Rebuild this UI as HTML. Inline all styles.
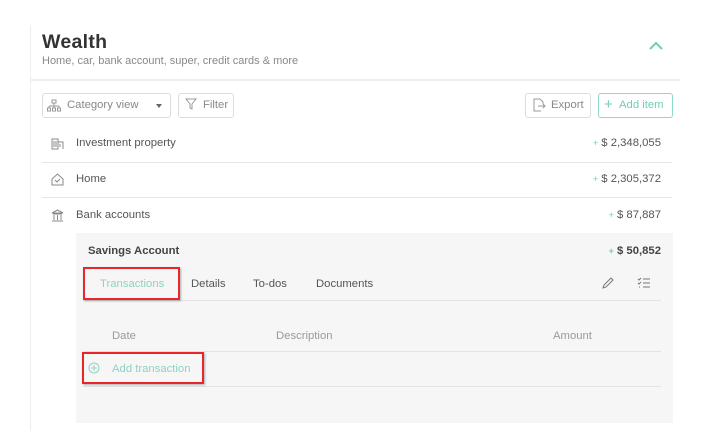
<!DOCTYPE html>
<html><head><style>
*{margin:0;padding:0;box-sizing:border-box}
body{width:706px;height:431px;background:#fff;font-family:"Liberation Sans",sans-serif;position:relative;overflow:hidden;color:#444}
.a{position:absolute}
.t{font-size:11.3px;color:#555}
.r{text-align:right;width:120px}
</style></head><body>
<div class="a" style="left:30px;top:25px;width:1px;height:406px;background:#eee"></div>
<div class="a" style="left:42px;top:31px;font-size:19.5px;font-weight:bold;color:#333;letter-spacing:0.3px">Wealth</div>
<div class="a" style="left:42px;top:55px;font-size:11px;color:#888">Home, car, bank account, super, credit cards &amp; more</div>
<svg class="a" style="left:648px;top:41px" width="16" height="10"><path d="M2 8 L8 2 L14 8" stroke="#6fcfb9" stroke-width="2" fill="none"/></svg>
<div class="a" style="left:30px;top:79px;width:650px;height:2px;background:#eee"></div>

<div class="a" style="left:42px;top:93px;width:129px;height:25px;border:1px solid #ddd;border-radius:3px"></div>
<svg class="a" style="left:47px;top:99px" width="14" height="14"><g stroke="#999" fill="none" stroke-width="1"><rect x="5" y="1" width="4" height="3"/><path d="M7 4v3M2 7h10M2 7v2M7 7v2M12 7v2"/><rect x="0.5" y="9" width="3" height="3"/><rect x="5.5" y="9" width="3" height="3"/><rect x="10.5" y="9" width="3" height="3"/></g></svg>
<div class="a t" style="left:67px;top:99px;color:#888">Category view</div>
<div class="a" style="left:156px;top:104px;border-left:3px solid transparent;border-right:3px solid transparent;border-top:4px solid #666"></div>
<div class="a" style="left:178px;top:93px;width:56px;height:25px;border:1px solid #ddd;border-radius:3px"></div>
<svg class="a" style="left:185px;top:98px" width="12" height="12"><path d="M1 1h10L7 6v5L5 10V6z" stroke="#999" fill="none"/></svg>
<div class="a t" style="left:203px;top:99px;color:#888">Filter</div>

<div class="a" style="left:525px;top:93px;width:66px;height:25px;border:1px solid #ddd;border-radius:3px"></div>
<svg class="a" style="left:532px;top:98px" width="14" height="14"><path d="M8 1H2v12h7M8 1l3 3v2M6 8h7M11 6l2 2-2 2" stroke="#999" fill="none"/></svg>
<div class="a t" style="left:551px;top:99px;color:#888">Export</div>
<div class="a" style="left:598px;top:93px;width:75px;height:25px;border:1px solid #8fd9c8;border-radius:3px"></div>
<div class="a" style="left:604px;top:96px;font-size:15px;color:#6fcfb9">+</div>
<div class="a t" style="left:619px;top:99px;color:#6fcfb9">Add item</div>

<svg class="a" style="left:51px;top:137px" width="13" height="13"><g stroke="#888" fill="none"><rect x="1" y="2" width="6" height="10"/><path d="M7 5h5v7M3 4v6M5 4v6M9 7v3"/></g></svg>
<div class="a t" style="left:76px;top:137px">Investment property</div>
<div class="a t r" style="left:541px;top:137px"><span style="color:#6fcfb9;font-size:9px">+</span> $ 2,348,055</div>
<div class="a" style="left:42px;top:162px;width:630px;height:1px;background:#e5e5e5"></div>

<svg class="a" style="left:51px;top:173px" width="13" height="13"><path d="M1 6L6.5 1 12 6v6H1z M4 7l2 2 3-3" stroke="#888" fill="none"/></svg>
<div class="a t" style="left:76px;top:173px">Home</div>
<div class="a t r" style="left:541px;top:173px"><span style="color:#6fcfb9;font-size:9px">+</span> $ 2,305,372</div>
<div class="a" style="left:42px;top:197px;width:630px;height:1px;background:#e5e5e5"></div>

<svg class="a" style="left:51px;top:209px" width="13" height="13"><path d="M1 4L6.5 1 12 4zM2 5h9M3 6v5M6.5 6v5M10 6v5M1 12h11" stroke="#888" fill="none"/></svg>
<div class="a t" style="left:76px;top:209px">Bank accounts</div>
<div class="a t r" style="left:541px;top:209px"><span style="color:#6fcfb9;font-size:9px">+</span> $ 87,887</div>

<div class="a" style="left:76px;top:233px;width:597px;height:190px;background:#f6f6f6"></div>
<div class="a t" style="left:88px;top:245px;font-weight:bold;color:#444">Savings Account</div>
<div class="a t r" style="left:541px;top:245px;font-weight:bold;color:#444"><span style="color:#6fcfb9;font-size:9px">+</span> $ 50,852</div>

<div class="a" style="left:84px;top:300px;width:577px;height:1px;background:#e3e3e3"></div>
<div class="a" style="left:88px;top:298px;width:88px;height:2px;background:#8fd9c8"></div>
<div class="a" style="left:83px;top:267px;width:97px;height:33px;border:2px solid #e8262a;box-shadow:1px 1px 2px rgba(0,0,0,0.3)"></div>
<div class="a t" style="left:100px;top:278px;color:#8fd2c3">Transactions</div>
<div class="a t" style="left:191px;top:278px">Details</div>
<div class="a t" style="left:253px;top:278px">To-dos</div>
<div class="a t" style="left:316px;top:278px">Documents</div>
<svg class="a" style="left:601px;top:276px" width="14" height="14"><path d="M2 12l1-3 7-7 2 2-7 7z" stroke="#777" fill="none"/></svg>
<svg class="a" style="left:637px;top:277px" width="14" height="12"><path d="M1 2l1 1 2-2M6 2h7M1 6l1 1 2-2M6 6h7M6 10h7M2 10h1" stroke="#777" fill="none"/></svg>

<div class="a t" style="left:112px;top:330px;color:#999">Date</div>
<div class="a t" style="left:276px;top:330px;color:#999">Description</div>
<div class="a t" style="left:553px;top:330px;color:#999">Amount</div>
<div class="a" style="left:84px;top:351px;width:577px;height:1px;background:#e3e3e3"></div>
<div class="a" style="left:84px;top:386px;width:577px;height:1px;background:#e3e3e3"></div>
<div class="a" style="left:82px;top:352px;width:122px;height:32px;border:2px solid #e8262a;box-shadow:1px 1px 2px rgba(0,0,0,0.3)"></div>
<svg class="a" style="left:88px;top:362px" width="12" height="12"><circle cx="6" cy="6" r="5" stroke="#8fd2c3" fill="none"/><path d="M6 3v6M3 6h6" stroke="#8fd2c3"/></svg>
<div class="a t" style="left:112px;top:363px;color:#8fd2c3">Add transaction</div>
</body></html>
